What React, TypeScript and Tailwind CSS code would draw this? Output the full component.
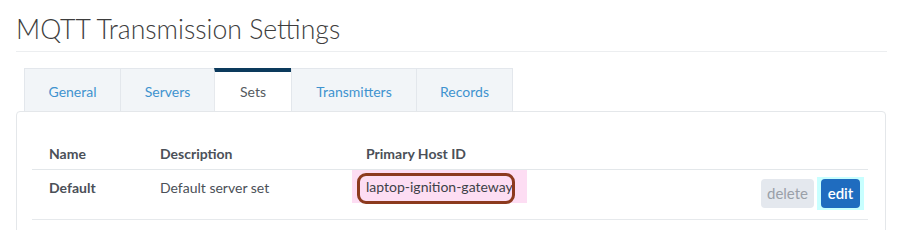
import React from "react";

export default function App() {
  const tabs = ["General", "Servers", "Sets", "Transmitters", "Records"];
  const widths = ["w-[96px]", "w-[94px]", "w-[77px]", "w-[125px]", "w-[97px]"];
  return (
    <div
      className="w-[900px] h-[230px] bg-white overflow-hidden"
      style={{ fontFamily: "Lato, 'Noto Sans', sans-serif" }}
    >
      <div className="mx-[16px] w-[871px] h-[52px] border-b border-[#eceef0] flex items-end pb-[5px]">
        <h1 className="text-[26.6px] leading-[34px] font-light text-[#3d3d3d]">
          MQTT Transmission Settings
        </h1>
      </div>
      <div className="mt-[16px] pl-[24px] flex h-[43px]">
        {tabs.map((t, i) => {
          const active = t === "Sets";
          return (
            <div
              key={t}
              className={
                widths[i] +
                " flex items-center justify-center text-[14px] border-l " +
                (i === tabs.length - 1 ? "border-r " : "") +
                (active
                  ? "bg-white border-t-[4px] border-t-[#0c3a5c] border-[#e6e9ed] text-[#555a60]"
                  : "bg-[#f2f5f8] border-t border-[#e3e7ec] text-[#3f93cf] pt-[2px]")
              }
            >
              {t}
            </div>
          );
        })}
      </div>
      <div className="ml-[16px] w-[870px] h-[200px] border border-[#e4e7ea] rounded-t-[4px] pl-[15px] pr-[17px] pt-[25px]">
        <div className="flex h-[33px] items-center border-b border-[#e3e7ea] text-[14px] font-bold text-[#4b5058]">
          <div className="w-[111px] pl-[17px]">Name</div>
          <div className="w-[206px] pl-[17px]">Description</div>
          <div className="pl-[17px]">Primary Host ID</div>
        </div>
        <div className="flex h-[50px] border-b border-[#e6e9ec] text-[14px] text-[#4b5058]">
          <div className="w-[111px] pl-[17px] pt-[7px] font-bold">Default</div>
          <div className="w-[206px] pl-[17px] pt-[7px]">Default server set</div>
          <div className="pl-[3px] flex-1">
            <div className="relative w-[175px] h-[33px] bg-[#fdddf3] pl-[14px] pt-[7px] leading-[20px] text-[#3d4148]">
              laptop-ignition-gateway
              <div className="absolute left-[5px] top-[3px] w-[158px] h-[31px] border-[3px] border-[#8c3a1e] rounded-[9px]" />
            </div>
          </div>
          <div className="flex items-start pt-[7px] pr-[4px]">
            <div className="mt-[2px] w-[53px] h-[29px] rounded-[4px] bg-[#e4e8ee] text-[#9aa0a8] text-[15px] flex items-center justify-center">
              delete
            </div>
            <div className="ml-[3px] bg-[#c8ffff] px-[4px] py-[2px]">
              <div className="w-[39px] h-[29px] rounded-[4px] bg-[#1f6cbf] text-white text-[15px] font-semibold flex items-center justify-center">
                edit
              </div>
            </div>
          </div>
        </div>
      </div>
    </div>
  );
}
